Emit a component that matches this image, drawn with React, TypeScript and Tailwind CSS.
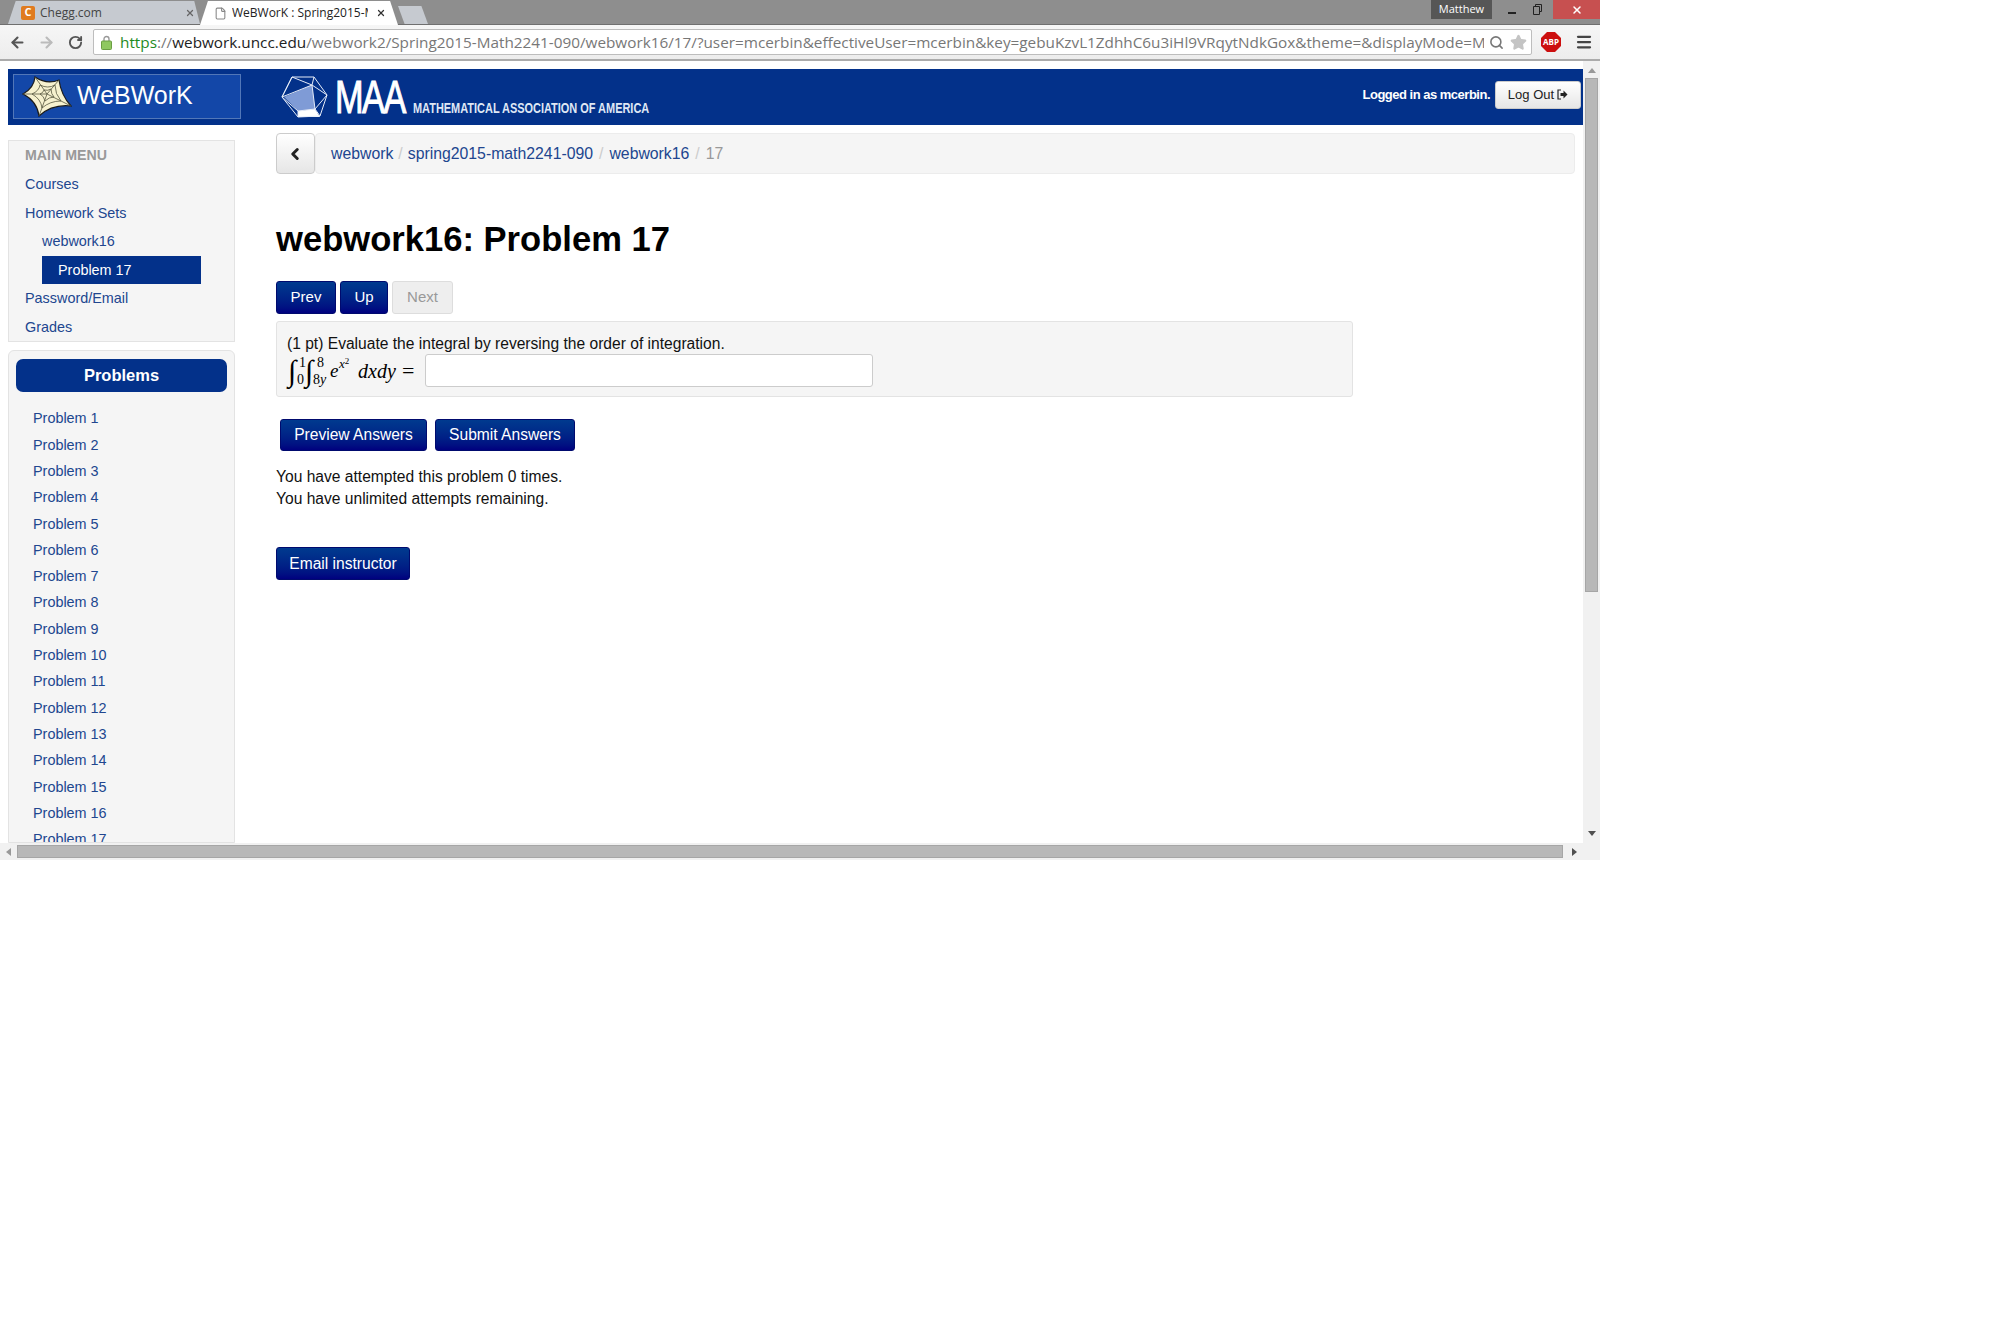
import { ArrowLeft, ArrowRight, ChevronLeft, File, RotateCw, Search, Star, Menu, X } from "lucide-react";

const problems = Array.from({ length: 17 }, (_, i) => `Problem ${i + 1}`);

const navBtn =
  "flex items-center rounded-[3px] border border-[#000a6e] bg-gradient-to-b from-[#003a8f] to-[#00007f] text-white";

function WebworkStar() {
  return (
    <svg width="50" height="41" viewBox="0 0 50 41" className="shrink-0">
      <path
        d="M13 1 Q25 9 37 4 Q39 19 49 30 Q30 28 17 40 Q15 25 1 18 Q12 12 13 1Z"
        fill="#f6f1cf"
        stroke="#1c1c1c"
        strokeWidth="1.2"
      />
      <path
        d="M25 18 L13 1 M25 18 L37 4 M25 18 L49 30 M25 18 L17 40 M25 18 L1 18 M18 9 Q26 13 33 9 Q33 18 39 25 Q28 25 20 32 Q19 23 10 18 Q17 15 18 9Z M22 14 Q26 15 29 13 Q29 18 32 21 Q27 21 23 25 Q22 20 18 18 Q21 17 22 14Z"
        fill="none"
        stroke="#55553f"
        strokeWidth="0.8"
      />
    </svg>
  );
}

function MaaMark() {
  return (
    <svg width="47" height="42" viewBox="0 0 47 42" className="shrink-0">
      <path d="M3 21 L31 9 L34 33 L17 35Z" fill="#7f9bd6" />
      <path d="M17 35 L34 33 L39 41 L17 41Z" fill="#ffffff" />
      <path
        d="M11 1 L33 1 L46 19 L39 40 L17 41 L1 21Z M11 1 L31 9 L33 1 M31 9 L46 19 M31 9 L1 21 M31 9 L34 33 L46 19 M34 33 L39 40 M34 33 L17 35 L1 21 M17 35 L17 41 M11 1 L1 21"
        fill="none"
        stroke="#e6ecf8"
        strokeWidth="1"
      />
    </svg>
  );
}

function BrowserChrome() {
  return (
    <div className="shrink-0 font-['Open_Sans',sans-serif]">
      <div className="flex h-[25px] border-b border-[#6f6f6f] bg-[#8e8e8e]">
        <div className="mt-[1px] ml-[8px] flex h-[23px] w-[192px] items-center rounded-t-[4px] bg-[#c6cad0] pr-[4px] pl-[13px] text-[12px] text-[#444] [clip-path:polygon(0_100%,4%_0,97%_0,100%_100%)]">
          <span className="mr-[5px] flex h-[14px] w-[14px] items-center justify-center rounded-[2px] bg-[#e07b1f] text-[11px] font-bold text-white">
            C
          </span>
          Chegg.com
          <X size={10} strokeWidth={3} className="mr-[1px] ml-auto text-[#666]" />
        </div>
        <div className="mt-[1px] flex h-[24px] w-[198px] items-center rounded-t-[4px] bg-white pl-[14px] text-[12px] text-[#222] [clip-path:polygon(0_100%,4%_0,96%_0,100%_100%)]">
          <File size={13} className="mr-[5px] shrink-0 text-[#888]" />
          <span className="w-[136px] overflow-hidden whitespace-nowrap">WeBWorK : Spring2015-M</span>
          <X size={10} strokeWidth={3} className="ml-[8px] text-[#333]" />
        </div>
        <div className="mt-[6px] h-[18px] w-[30px] bg-[#c6cad0] [clip-path:polygon(22%_100%,0_0,78%_0,100%_100%)]" />
        <div className="ml-auto flex h-[19px] items-start">
          <div className="mr-[16px] flex h-[19px] w-[61px] items-center justify-center bg-[#565656] text-[11px] text-white">Matthew</div>
          <div className="mt-[12px] mr-[17px] h-[2px] w-[8px] bg-[#222]" />
          <svg width="9" height="11" viewBox="0 0 9 11" className="mt-[4px] mr-[11px]">
            <path d="M2.5 2.5V.5h6v7h-2M.5 2.5h6v8h-6Z" fill="none" stroke="#222" />
          </svg>
          <div className="flex h-[19px] w-[47px] items-center justify-center bg-[#c75050]">
            <X size={12} strokeWidth={3} className="text-white" />
          </div>
        </div>
      </div>
      <div className="flex h-[36px] items-center border-b-[2px] border-[#ababab] bg-gradient-to-b from-[#f6f6f6] to-[#ededed]">
        <ArrowLeft size={17} strokeWidth={3} className="ml-[9px] text-[#555]" />
        <ArrowRight size={17} strokeWidth={3} className="ml-[12px] text-[#bbb]" />
        <RotateCw size={15} strokeWidth={3} className="ml-[13px] text-[#555]" />
        <div className="ml-[10px] flex h-[26px] w-[1439px] items-center rounded-[2px] border border-[#bdbdbd] bg-white pr-[4px] pl-[7px]">
          <svg width="11" height="15" viewBox="0 0 11 15" className="shrink-0">
            <path d="M3 6V4a2.5 2.5 0 0 1 5 0v2" fill="none" stroke="#999" strokeWidth="1.4" />
            <rect x="0.5" y="6" width="10" height="8.5" rx="1" fill="#8fc860" stroke="#6b9e43" />
          </svg>
          <div className="ml-[8px] w-[1365px] overflow-hidden text-[15.3px] whitespace-nowrap text-[#777]">
            <span className="text-[#1e8a1e]">https</span>://<span className="text-[#222]">webwork.uncc.edu</span>
            /webwork2/Spring2015-Math2241-090/webwork16/17/?user=mcerbin&effectiveUser=mcerbin&key=gebuKzvL1ZdhhC6u3iHl9VRqytNdkGox&theme=&displayMode=M
          </div>
          <Search size={15} strokeWidth={2.5} className="ml-[5px] shrink-0 text-[#777]" />
          <Star size={17} fill="#c4c4c4" className="ml-[6px] shrink-0 text-[#c4c4c4]" />
        </div>
        <div className="ml-[9px] flex h-[20px] w-[20px] items-center justify-center bg-[#cc0f0f] text-[8px] font-bold text-white [clip-path:polygon(30%_0,70%_0,100%_30%,100%_70%,70%_100%,30%_100%,0_70%,0_30%)]">
          ABP
        </div>
        <Menu size={18} strokeWidth={3} className="ml-[14px] text-[#444]" />
      </div>
    </div>
  );
}

function Header() {
  return (
    <div className="ml-[8px] flex h-[56px] w-[1575px] items-center bg-[#03318a]">
      <div className="mb-[2px] ml-[5px] flex h-[45px] w-[228px] items-center border border-[#5277b8] bg-[#1347a8] pl-[8px]">
        <WebworkStar />
        <span className="ml-[5px] text-[25px] text-white">WeBWorK</span>
      </div>
      <div className="ml-[40px]">
        <MaaMark />
      </div>
      <span className="ml-[7px] w-[68px] origin-left scale-x-[0.745] text-[46px] leading-none font-normal tracking-[-2px] text-white [-webkit-text-stroke:1px_white]">
        MAA
      </span>
      <span className="mt-[22px] ml-[10px] w-[238px] origin-left scale-x-[0.73] text-[15px] font-bold whitespace-nowrap text-[#dfe7f5]">
        MATHEMATICAL ASSOCIATION OF AMERICA
      </span>
      <span className="mb-[5px] ml-auto text-[13px] font-bold tracking-[-0.5px] text-white">Logged in as mcerbin.</span>
      <div className="mr-[2px] mb-[5px] ml-[5px] flex h-[28px] w-[86px] items-center justify-center rounded-[3px] border border-[#ccc] bg-gradient-to-b from-white to-[#e6e6e6] text-[13px] text-[#222]">
        Log Out
        <svg width="11" height="11" viewBox="0 0 11 11" className="ml-[3px]">
          <path d="M4 1H1v9h3" fill="none" stroke="#222" strokeWidth="1.2" />
          <path d="M3.5 4h3V1.5L10.5 5.5 6.5 9.5V7h-3Z" fill="#222" />
        </svg>
      </div>
    </div>
  );
}

function Sidebar() {
  const link = "h-[28.5px] flex items-center pt-[2px] text-[#21468f]";
  return (
    <div className="mt-[7px] ml-[8px] flex w-[227px] shrink-0 flex-col text-[14.4px]">
      <div className="h-[202px] border border-[#e3e3e3] bg-[#f5f5f5] pl-[16px]">
        <div className="flex h-[25px] items-end text-[14.2px] font-bold text-[#999]">MAIN MENU</div>
        <div className="mt-[4px]">
          <div className={link}>Courses</div>
          <div className={link}>Homework Sets</div>
          <div className={`${link} pl-[17px]`}>webwork16</div>
          <div className="ml-[17px] flex h-[28px] w-[159px] items-center bg-[#03318a] pt-[2px] pl-[16px] text-white">Problem 17</div>
          <div className={link}>Password/Email</div>
          <div className={`${link} pt-[3px]`}>Grades</div>
        </div>
      </div>
      <div className="mt-[8px] min-h-0 flex-1 overflow-hidden rounded-t-[6px] border border-[#e3e3e3] bg-[#f5f5f5] px-[7px] pt-[8px]">
        <div className="flex h-[33px] items-center justify-center rounded-[7px] bg-[#03318a] text-[16.5px] font-bold text-white">
          Problems
        </div>
        <div className="mt-[14px] pl-[17px]">
          {problems.map((p) => (
            <div key={p} className="flex h-[26.3px] items-center text-[#21468f]">
              {p}
            </div>
          ))}
        </div>
      </div>
    </div>
  );
}

function MathLine() {
  return (
    <div className="ml-[1px] flex h-[33px] w-[137px] shrink-0 items-center font-['Liberation_Serif',serif] leading-none text-black">
      <span className="w-[11px] text-[30px]">∫</span>
      <span className="flex w-[6px] flex-col text-[14px] leading-[17px]">
        <span>1</span>
        <span className="-ml-[2px]">0</span>
      </span>
      <span className="w-[8px] text-[30px]">∫</span>
      <span className="flex w-[17px] flex-col text-[14px] leading-[17px]">
        <span className="pl-[4px]">8</span>
        <span className="whitespace-nowrap">
          8<span className="italic">y</span>
        </span>
      </span>
      <span className="w-[9px] text-[19px] italic">e</span>
      <span className="mb-[14px] w-[19px] text-[13px] italic">
        x<span className="align-[4px] text-[9px] not-italic">2</span>
      </span>
      <span className="w-[39px] text-[20px] italic">dxdy</span>
      <span className="ml-[5px] text-[22px]">=</span>
    </div>
  );
}

function Main() {
  return (
    <div className="ml-[41px] flex min-w-0 flex-1 flex-col pr-[8px] text-[15.6px] text-[#111]">
      <div className="flex h-[42px]">
        <div className="flex h-[41px] w-[39px] items-center justify-center rounded-[4px] border border-[#ccc] bg-gradient-to-b from-white to-[#e6e6e6] pr-[2px]">
          <ChevronLeft size={18} strokeWidth={4} className="text-[#222]" />
        </div>
        <div className="flex h-[41px] flex-1 items-center rounded-[4px] border border-[#ececec] bg-[#f5f5f5] pl-[15px] text-[15.8px]">
          <span className="text-[#21468f]">webwork</span>
          <span className="mx-[5px] text-[#ccc]">/</span>
          <span className="text-[#21468f]">spring2015-math2241-090</span>
          <span className="mx-[6px] text-[#ccc]">/</span>
          <span className="text-[#21468f]">webwork16</span>
          <span className="mx-[6px] text-[#ccc]">/</span>
          <span className="text-[#999]">17</span>
        </div>
      </div>
      <h1 className="mt-[43px] text-[34.6px] leading-[42px] font-bold text-black">webwork16: Problem 17</h1>
      <div className="mt-[21px] flex h-[33px] gap-[4px] text-[15px]">
        <div className={`${navBtn} w-[60px] justify-center`}>Prev</div>
        <div className={`${navBtn} w-[48px] justify-center`}>Up</div>
        <div className="flex w-[61px] items-center justify-center rounded-[3px] border border-[#ddd] bg-[#eeeeee] text-[#999]">Next</div>
      </div>
      <div className="mt-[7px] h-[76px] w-[1077px] rounded-[3px] border border-[#e3e3e3] bg-[#f5f5f5] pt-[11px] pl-[10px]">
        <div className="h-[21px] leading-[21px]">(1 pt) Evaluate the integral by reversing the order of integration.</div>
        <div className="flex">
          <MathLine />
          <div className="h-[33px] w-[448px] rounded-[3px] border border-[#ccc] bg-white" />
        </div>
      </div>
      <div className="mt-[22px] ml-[4px] flex h-[32px] gap-[8px]">
        <div className={`${navBtn} w-[147px] justify-center`}>Preview Answers</div>
        <div className={`${navBtn} w-[140px] justify-center`}>Submit Answers</div>
      </div>
      <div className="mt-[15px] leading-[22px]">
        <div>You have attempted this problem 0 times.</div>
        <div>You have unlimited attempts remaining.</div>
      </div>
      <div className={`${navBtn} mt-[37px] h-[33px] w-[134px] justify-center`}>Email instructor</div>
    </div>
  );
}

export default function App() {
  return (
    <div className="h-[1333px] w-[2000px] bg-white font-['Liberation_Sans',sans-serif]">
      <div className="flex h-[860px] w-[1600px] flex-col overflow-hidden">
        <BrowserChrome />
        <div className="flex min-h-0 flex-1">
          <div className="flex w-[1583px] min-w-0 flex-col">
            <div className="flex min-h-0 flex-1 flex-col overflow-hidden pt-[8px]">
              <Header />
              <div className="flex min-h-0 flex-1 pt-[8px]">
                <Sidebar />
                <Main />
              </div>
            </div>
            <div className="flex h-[17px] shrink-0 items-center bg-[#f1f1f1]">
              <span className="ml-[6px] h-0 w-0 border-y-[4px] border-r-[5px] border-y-transparent border-r-[#999]" />
              <div className="ml-[6px] h-[13px] w-[1546px] border border-[#a6a6a6] bg-[#b8b8b8]" />
              <span className="ml-[9px] h-0 w-0 border-y-[4px] border-l-[5px] border-y-transparent border-l-[#505050]" />
            </div>
          </div>
          <div className="flex w-[17px] shrink-0 flex-col items-center bg-[#f1f1f1] pt-[7px]">
            <span className="h-0 w-0 border-x-[4px] border-b-[5px] border-x-transparent border-b-[#999]" />
            <div className="mt-[5px] h-[514px] w-[13px] border border-[#a6a6a6] bg-[#b8b8b8]" />
            <span className="mt-[239px] h-0 w-0 border-x-[4px] border-t-[5px] border-x-transparent border-t-[#505050]" />
          </div>
        </div>
      </div>
    </div>
  );
}
